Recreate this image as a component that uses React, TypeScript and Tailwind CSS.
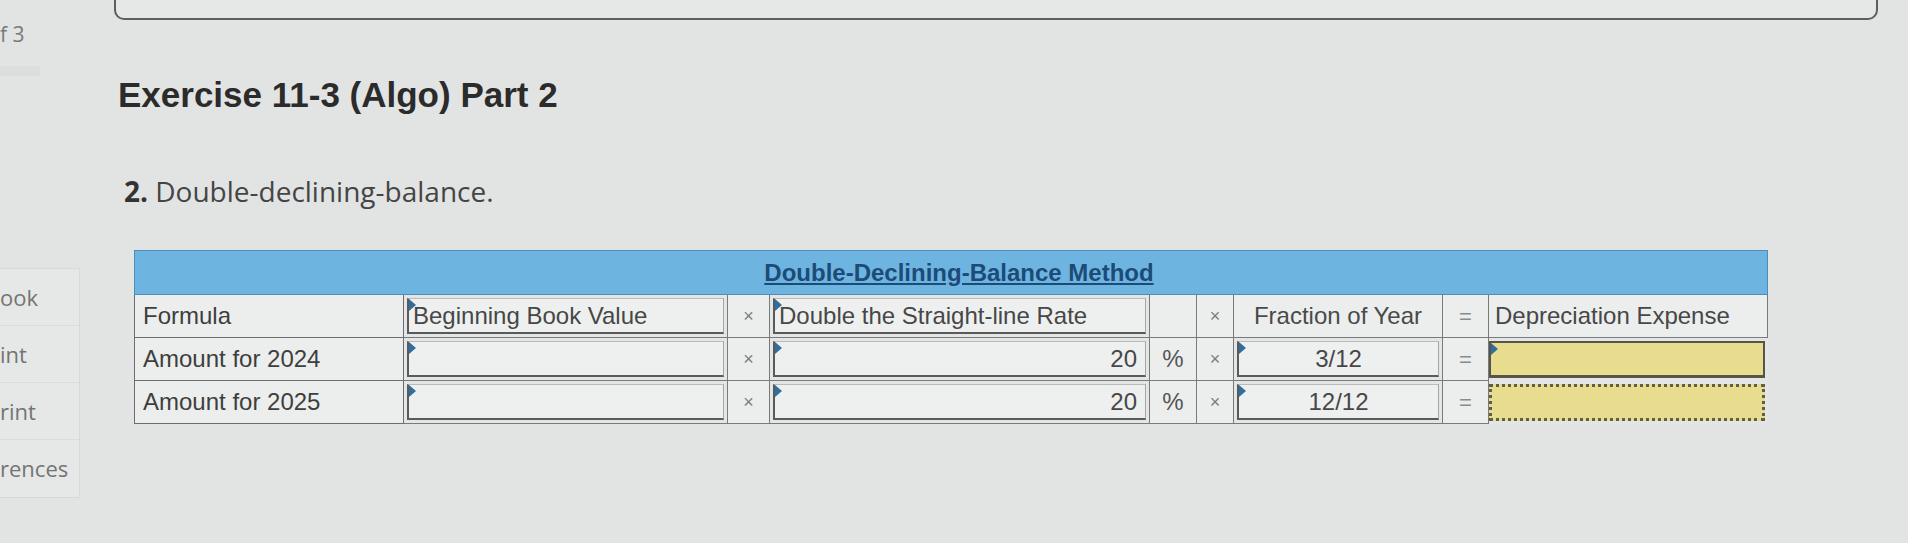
import React from 'react'

const cols = 'grid grid-cols-[270px_324px_42px_380px_47px_37px_209px_46px_279px]'

function Flag() {
  return (
    <span className="absolute left-0 top-0 h-0 w-0 border-y-[6px] border-l-[7px] border-y-transparent border-l-[#2f6e9e]" />
  )
}

function LabelCell({ children }: { children?: React.ReactNode }) {
  return (
    <div className="flex h-[43px] items-center border-b border-r border-l border-[#6d6d6d] bg-[#eceeed] pl-2 text-[24px] text-[#3e3e3e]">
      {children}
    </div>
  )
}

function InputCell({
  children,
  align = 'left',
  flag = true,
}: {
  children?: React.ReactNode
  align?: 'left' | 'right' | 'center'
  flag?: boolean
}) {
  const justify =
    align === 'right' ? 'justify-end pr-2' : align === 'center' ? 'justify-center' : 'justify-start pl-1'
  return (
    <div className="h-[43px] border-b border-r border-[#7a7a7a] bg-[#e4e6e5] p-[3px]">
      <div
        className={`relative flex h-full items-center border-l-2 border-b-2 border-t border-r border-[#5a5a5a] border-t-[#b9bbba] border-r-[#a5a7a6] bg-[#eef0ef] text-[24px] text-[#474747] ${justify}`}
      >
        {flag ? <Flag /> : null}
        {children}
      </div>
    </div>
  )
}

function OpCell({ children }: { children?: React.ReactNode }) {
  return (
    <div className="flex h-[43px] items-center justify-center border-b border-r border-[#7a7a7a] bg-[#eceeed] text-[#777]">
      {children}
    </div>
  )
}

function Times() {
  return <span className="text-[18px] text-[#7c7c7c]">×</span>
}

function Equals() {
  return <span className="text-[22px] text-[#8a8a8a]">=</span>
}

function Percent() {
  return <span className="text-[24px] text-[#555]">%</span>
}

function YellowCell({ dotted }: { dotted?: boolean }) {
  return (
    <div className="h-[43px] bg-[#e4e6e5] py-[3px] pr-[3px]">
      {dotted ? (
        <div className="h-full border-[3px] border-dotted border-[#5e5e4c] bg-[#e8dd8f]" />
      ) : (
        <div className="relative h-full border-l-2 border-b-[3px] border-t-2 border-r-2 border-[#55554a] bg-[#e8dd8f]">
          <Flag />
        </div>
      )}
    </div>
  )
}

function DdbTable() {
  return (
    <div className="w-[1634px] font-['Liberation_Sans',Arial,sans-serif]">
      <div className="flex h-[45px] items-center justify-center border border-[#4e8dbb] bg-[#6db4e1]">
        <span className="ml-4 text-[24px] font-bold text-[#1d4b77] underline underline-offset-2">
          Double-Declining-Balance Method
        </span>
      </div>

      <div className={cols}>
        <LabelCell>Formula</LabelCell>
        <InputCell>Beginning Book Value</InputCell>
        <OpCell>
          <Times />
        </OpCell>
        <InputCell>Double the Straight-line Rate</InputCell>
        <OpCell />
        <OpCell>
          <Times />
        </OpCell>
        <OpCell>
          <span className="text-[24px] text-[#4a4a4a]">Fraction of Year</span>
        </OpCell>
        <OpCell>
          <Equals />
        </OpCell>
        <div className="flex h-[43px] items-center border-b border-r border-[#7a7a7a] bg-[#eceeed] pl-1.5 text-[24px] text-[#474747]">
          Depreciation Expense
        </div>

        <LabelCell>Amount for 2024</LabelCell>
        <InputCell />
        <OpCell>
          <Times />
        </OpCell>
        <InputCell align="right">20</InputCell>
        <OpCell>
          <Percent />
        </OpCell>
        <OpCell>
          <Times />
        </OpCell>
        <InputCell align="center">3/12</InputCell>
        <OpCell>
          <Equals />
        </OpCell>
        <YellowCell />

        <LabelCell>Amount for 2025</LabelCell>
        <InputCell />
        <OpCell>
          <Times />
        </OpCell>
        <InputCell align="right">20</InputCell>
        <OpCell>
          <Percent />
        </OpCell>
        <OpCell>
          <Times />
        </OpCell>
        <InputCell align="center">12/12</InputCell>
        <OpCell>
          <Equals />
        </OpCell>
        <YellowCell dotted />
      </div>
    </div>
  )
}

export default function App() {
  return (
    <div className="flex h-[543px] w-[1908px] overflow-hidden bg-[#e2e4e3] font-['Open_Sans',sans-serif]">
      {/* left rail, cut off by the window */}
      <aside className="flex w-[80px] shrink-0 flex-col">
        <div className="pt-[19px] text-[21px] leading-[30px] text-[#7a7a7a]">f 3</div>
        <div className="mt-[17px] h-[10px] w-[40px] bg-[#dcdedd]" />
        <div className="mt-[192px] flex flex-col border-r border-y border-[#d7d9d8] bg-[#e6e8e7] text-[22px] text-[#747474]">
          <div className="flex h-[57px] items-center border-b border-[#dadcdb]">ook</div>
          <div className="flex h-[57px] items-center border-b border-[#dadcdb]">int</div>
          <div className="flex h-[57px] items-center border-b border-[#dadcdb]">rint</div>
          <div className="flex h-[57px] items-center">rences</div>
        </div>
      </aside>

      <main className="flex flex-1 flex-col pl-[34px]">
        <div className="h-[20px] w-[1764px] rounded-b-[10px] border-x-2 border-b-2 border-[#5e5e5e] bg-[#e6e8e7]" />

        <h1 className="mt-[55px] pl-1 font-['Liberation_Sans',Arial,sans-serif] text-[35px] font-bold leading-[40px] text-[#2b2b2b]">
          Exercise 11-3 (Algo) Part 2
        </h1>

        <p className="mt-[57px] pl-[10px] text-[28px] leading-[38px] text-[#454545]">
          <span className="font-bold text-[#333]">2.</span> Double-declining-balance.
        </p>

        <div className="mt-[40px] pl-[20px]">
          <DdbTable />
        </div>
      </main>
    </div>
  )
}
